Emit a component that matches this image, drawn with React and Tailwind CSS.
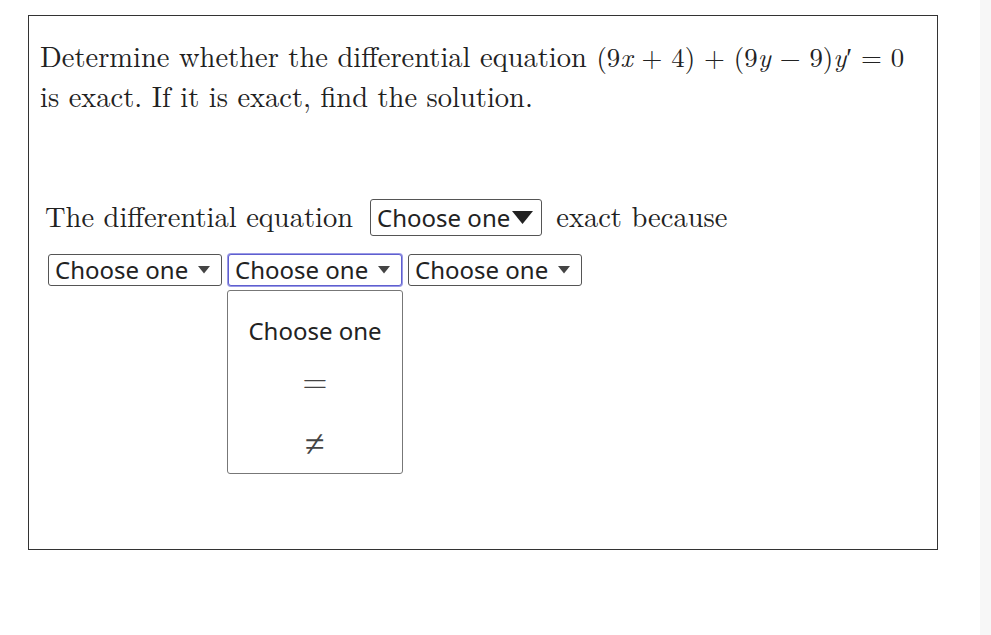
import React from "react";

const serif = { fontFamily: '"Latin Modern Roman","CMU Serif","Liberation Serif",serif' };
const sans = { fontFamily: '"Noto Sans","Open Sans",sans-serif' };

function Tri({ big }) {
  return big ? (
    <svg width="21" height="14" viewBox="0 0 21 14" className="ml-[2px]">
      <path d="M0 0 H21 L10.5 13 Z" fill="#222" />
    </svg>
  ) : (
    <svg width="12" height="8" viewBox="0 0 12 8" className="ml-[10px]">
      <path d="M0 0 H12 L6 7.5 Z" fill="#444" />
    </svg>
  );
}

function Sel({ big, focused, className = "" }) {
  return (
    <div
      className={
        "inline-flex items-center rounded-[3px] border bg-white text-[#222] " +
        (focused ? "border-[#5f5fcf] shadow-[0_0_0_1px_#9a9ae6] " : "border-[#555] ") +
        className
      }
      style={sans}
    >
      <span className="leading-none">Choose one</span>
      <Tri big={big} />
    </div>
  );
}

export default function App() {
  return (
    <div className="flex min-h-[635px] bg-white">
      <div className="w-[980px] shrink-0">
        <div className="ml-[28px] mt-[15px] h-[535px] w-[910px] border border-[#333] bg-white">
          <p className="pl-[11px] pt-[20px] text-[28.5px] leading-[39px] text-[#222]" style={serif}>
            Determine whether the differential equation{" "}
            <span className="text-[26.8px]">
              (9<i>x</i> + 4) + (9<i>y</i> − 9)<i>y</i>′ = 0
            </span>
            <br />
            is exact. If it is exact, find the solution.
          </p>
          <div className="mt-[84px] flex h-[37px] items-center pl-[16px] text-[28.5px] text-[#222]" style={serif}>
            <span className="pb-[5px] leading-[30px]">The differential equation</span>
            <Sel big className="ml-[17px] h-[37px] pl-[6px] pr-[8px] text-[24px]" />
            <span className="ml-[14px] pb-[5px] leading-[30px]">exact because</span>
          </div>
          <div className="relative mt-[18px] flex items-center gap-[6px] pl-[19px]">
            <Sel className="h-[32px] w-[174px] px-[6px] text-[24px]" />
            <div className="relative">
              <Sel focused className="h-[32px] w-[174px] px-[6px] text-[24px]" />
              <div
                className="absolute left-[-1px] top-[36px] flex h-[184px] w-[176px] flex-col items-center rounded-[3px] border border-[#777] bg-white text-[24px] text-[#222]"
                style={sans}
              >
                <div className="mt-[28px] leading-none">Choose one</div>
                <div className="mt-[20px] text-[32px] leading-none text-[#444]" style={serif}>=</div>
                <div className="mt-[28px] text-[36px] leading-none text-[#444]" style={serif}>≠</div>
              </div>
            </div>
            <Sel className="h-[32px] w-[174px] px-[6px] text-[24px]" />
          </div>
        </div>
      </div>
      <div className="w-[11px] bg-[#f7f7f7]" />
    </div>
  );
}
